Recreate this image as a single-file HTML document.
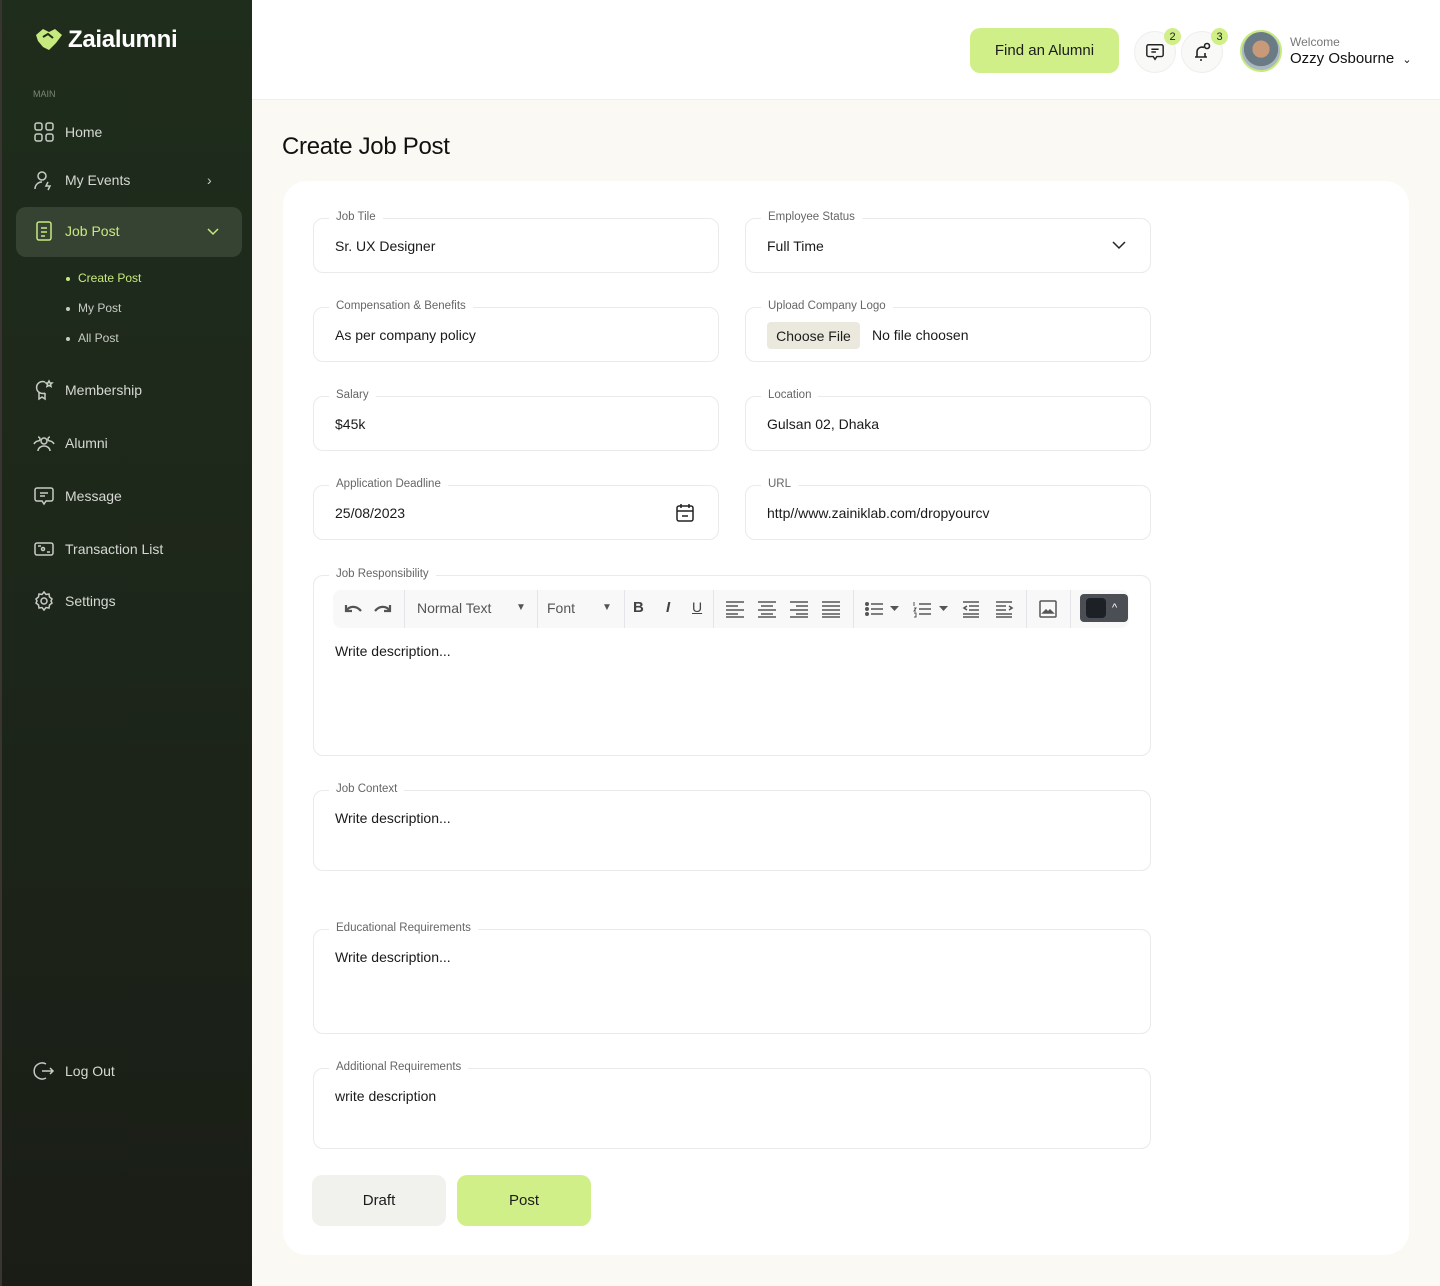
<!DOCTYPE html>
<html><head><meta charset="utf-8"><style>
*{box-sizing:border-box;margin:0;padding:0}
body{width:1440px;height:1286px;font-family:"Liberation Sans",sans-serif;background:#fbf9f3;position:relative;overflow:hidden;color:#1c1c1c}
.sb{position:absolute;left:0;top:0;width:252px;height:1286px;background:linear-gradient(180deg,#1f2d1c 0%,#1d261a 50%,#1a1d16 100%);border-left:2px solid #3a3530}
.logo{position:absolute;left:32px;top:26px;color:#fff;font-size:24px;font-weight:bold;display:flex;align-items:center;gap:4px;letter-spacing:-0.3px}
.main{position:absolute;left:31px;top:89px;font-size:9px;color:#7d8479}
.ni{position:absolute;left:31px;display:flex;align-items:center;gap:10px;color:#d6d8d3;font-size:14px}
.ni svg{width:22px;height:22px;stroke:#c8cbc5;fill:none;stroke-width:1.5}
.act{position:absolute;left:14px;top:207px;width:226px;height:50px;background:#364332;border-radius:10px}
.sub{position:absolute;left:64px;font-size:12px;color:#c9ccc5}
.sub:before{content:"";display:inline-block;width:4px;height:4px;border-radius:50%;background:currentColor;margin-right:8px;vertical-align:middle}
.hdr{position:absolute;left:252px;top:0;width:1188px;height:100px;background:#fff;border-bottom:1px solid #eee}
.btn1{position:absolute;left:970px;top:28px;width:149px;height:45px;background:#d0ef88;border-radius:10px;font-size:15px;display:flex;align-items:center;justify-content:center}
.circ{position:absolute;top:31px;width:42px;height:42px;border-radius:50%;background:#f9f9f7;border:1px solid #eee;display:flex;align-items:center;justify-content:center}
.badge{position:absolute;top:-4px;right:-6px;width:17px;height:17px;border-radius:50%;background:#d0ef88;font-size:11px;display:flex;align-items:center;justify-content:center}
h1{position:absolute;left:282px;top:133px;font-size:24px;font-weight:normal;color:#111;letter-spacing:-0.3px}
.card{position:absolute;left:283px;top:181px;width:1126px;height:1074px;background:#fff;border-radius:24px}
.f{position:absolute;border:1px solid #eaeaea;border-radius:10px;background:#fff}
.f .l{position:absolute;top:-8px;left:15px;padding:0 7px;background:#fff;font-size:11.5px;color:#666}
.f .v{position:absolute;left:21px;top:19px;font-size:14px;color:#1a1a1a}
.tb{position:absolute;left:19px;top:14px;width:796px;height:38px;background:#f8f8f8;border-radius:8px;font-size:14px;color:#555}
.tb>*{position:absolute}
.sep{width:1px;height:38px;top:0;background:#e3e5ea}
.tb svg{top:10px}
.bt{position:absolute;top:994px;width:134px;height:51px;border-radius:10px;display:flex;align-items:center;justify-content:center;font-size:15px}
</style></head><body>
<div class="sb">
<div class="logo"><svg width="30" height="26" viewBox="0 0 30 26"><path d="M2 8 L9 2 L15 5 L21 2 L28 8 L22 16 L15 23 L9 20 L4 14 Z" fill="#c6ea7e"/><path d="M9 10 L14 7 L19 11" stroke="#1f2d1c" stroke-width="2" fill="none"/></svg>Zaialumni</div>
<div class="main">MAIN</div>
<div class="ni" style="top:121px"><svg viewBox="0 0 22 22"><rect x="2" y="2" width="7" height="7" rx="2"/><rect x="13" y="2" width="7" height="7" rx="2"/><rect x="2" y="13" width="7" height="7" rx="2"/><rect x="13" y="13" width="7" height="7" rx="2"/></svg>Home</div>
<div class="ni" style="top:169px"><svg viewBox="0 0 22 22"><circle cx="9" cy="7" r="4"/><path d="M2 20c0-4 3-7 7-7M15 13l-2 4h4l-2 4"/></svg>My Events</div>
<div style="position:absolute;left:205px;top:172px;color:#ccc;font-size:14px">›</div>
<div class="act"></div>
<div class="ni" style="top:220px;color:#c6ea7e"><svg viewBox="0 0 22 22" style="stroke:#c6ea7e"><rect x="4" y="2" width="14" height="18" rx="2"/><path d="M8 8h6M8 12h6M8 16h4"/></svg>Job Post</div>
<svg style="position:absolute;left:205px;top:228px" width="12" height="8"><path d="M1 1l5 5 5-5" stroke="#c6ea7e" fill="none" stroke-width="1.5"/></svg>
<div class="sub" style="top:271px;color:#c6ea7e">Create Post</div>
<div class="sub" style="top:301px">My Post</div>
<div class="sub" style="top:331px">All Post</div>
<div class="ni" style="top:379px"><svg viewBox="0 0 22 22"><path d="M12 3a6 6 0 1 0 0 11M6 13v7l3-2 3 2v-6"/><path d="M16 2l1 2 2 0-1.5 1.5.5 2-2-1-2 1 .5-2L13 4h2z"/></svg>Membership</div>
<div class="ni" style="top:432px"><svg viewBox="0 0 22 22"><circle cx="11" cy="9" r="3"/><path d="M5 19c0-3 3-5 6-5s6 2 6 5M5 5a2 2 0 1 1 0 4M17 5a2 2 0 1 0 0 4M1 12c1-2 3-3 4-3M21 12c-1-2-3-3-4-3"/></svg>Alumni</div>
<div class="ni" style="top:485px"><svg viewBox="0 0 22 22"><path d="M4 3h14a2 2 0 0 1 2 2v9a2 2 0 0 1-2 2h-5l-2 3-2-3H4a2 2 0 0 1-2-2V5a2 2 0 0 1 2-2zM7 8h8M7 11h5"/></svg>Message</div>
<div class="ni" style="top:538px"><svg viewBox="0 0 22 22"><rect x="2" y="5" width="18" height="12" rx="2"/><circle cx="10" cy="11" r="1.5"/><path d="M5 8h3M14 14h3"/></svg>Transaction List</div>
<div class="ni" style="top:590px"><svg viewBox="0 0 22 22"><circle cx="11" cy="11" r="3"/><path d="M11 2l2 2.5 3-.5.5 3L19 9l-1 2 1 2-2.5 2-.5 3-3-.5L11 20l-2-2.5-3 .5-.5-3L3 13l1-2-1-2 2.5-2 .5-3 3 .5z"/></svg>Settings</div>
<div class="ni" style="top:1060px"><svg viewBox="0 0 22 22"><path d="M13 4a8 8 0 1 0 0 14M9 11h11M17 8l3 3-3 3"/></svg>Log Out</div>
</div>
<div class="hdr"></div>
<div class="btn1">Find an Alumni</div>
<div class="circ" style="left:1134px"><svg width="20" height="20" viewBox="0 0 22 22" fill="none" stroke="#222" stroke-width="1.6"><path d="M4 3h14a2 2 0 0 1 2 2v9a2 2 0 0 1-2 2h-5l-2 3-2-3H4a2 2 0 0 1-2-2V5a2 2 0 0 1 2-2zM7 8h8M7 11h5"/></svg><div class="badge">2</div></div>
<div class="circ" style="left:1181px"><svg width="22" height="22" viewBox="0 0 22 22" fill="none" stroke="#222" stroke-width="1.6"><path d="M4 16h12M6 16v-5a5 5 0 0 1 7-4.5M14 16v-4M9 19h2"/><circle cx="16" cy="5" r="2.5"/></svg><div class="badge">3</div></div>
<div style="position:absolute;left:1240px;top:30px;width:42px;height:42px;border-radius:50%;border:2px solid #c6ea7e;background:radial-gradient(circle at 50% 45%,#c89a7a 0 30%,#6a7b86 31% 60%,#a9b5bf 61%)"></div>
<div style="position:absolute;left:1290px;top:35px;font-size:12px;color:#777">Welcome</div>
<div style="position:absolute;left:1290px;top:50px;font-size:15px;color:#111">Ozzy Osbourne <span style="font-size:11px;margin-left:4px">⌄</span></div>
<h1>Create Job Post</h1>
<div class="card">
<div class="f" style="left:30px;top:37px;width:406px;height:55px"><span class="l">Job Tile</span><span class="v">Sr. UX Designer</span></div>
<div class="f" style="left:462px;top:37px;width:406px;height:55px"><span class="l">Employee Status</span><span class="v">Full Time</span><svg style="position:absolute;right:24px;top:22px" width="14" height="9"><path d="M1 1l6 6 6-6" stroke="#222" fill="none" stroke-width="1.5"/></svg></div>
<div class="f" style="left:30px;top:126px;width:406px;height:55px"><span class="l">Compensation &amp; Benefits</span><span class="v">As per company policy</span></div>
<div class="f" style="left:462px;top:126px;width:406px;height:55px"><span class="l">Upload Company Logo</span><span style="position:absolute;left:21px;top:14px;width:93px;height:27px;background:#ebe8dd;border-radius:4px;font-size:14px;display:flex;align-items:center;justify-content:center">Choose File</span><span class="v" style="left:126px">No file choosen</span></div>
<div class="f" style="left:30px;top:215px;width:406px;height:55px"><span class="l">Salary</span><span class="v">$45k</span></div>
<div class="f" style="left:462px;top:215px;width:406px;height:55px"><span class="l">Location</span><span class="v">Gulsan 02, Dhaka</span></div>
<div class="f" style="left:30px;top:304px;width:406px;height:55px"><span class="l">Application Deadline</span><span class="v">25/08/2023</span><svg style="position:absolute;right:23px;top:17px" width="20" height="20" viewBox="0 0 20 20" fill="none" stroke="#222" stroke-width="1.5"><rect x="2" y="3" width="16" height="15" rx="2"/><path d="M2 8h16M6 1v4M14 1v4M7 13h6"/></svg></div>
<div class="f" style="left:462px;top:304px;width:406px;height:55px"><span class="l">URL</span><span class="v">http//www.zainiklab.com/dropyourcv</span></div>
<div class="f" style="left:30px;top:394px;width:838px;height:181px"><span class="l">Job Responsibility</span>
<div class="tb">
<svg style="left:10px" width="20" height="18" viewBox="0 0 20 18" fill="none" stroke="#555" stroke-width="2.2"><path d="M3 5v6h6M3 11c3-5 10-6 15 0"/></svg>
<svg style="left:40px" width="20" height="18" viewBox="0 0 20 18" fill="none" stroke="#555" stroke-width="2.2"><path d="M17 5v6h-6M17 11c-3-5-10-6-15 0"/></svg>
<span class="sep" style="left:71px"></span>
<span style="left:84px;top:10px">Normal Text</span><span style="left:183px;top:12px;font-size:10px">▼</span>
<span class="sep" style="left:204px"></span>
<span style="left:214px;top:10px">Font</span><span style="left:269px;top:12px;font-size:10px">▼</span>
<span class="sep" style="left:291px"></span>
<b style="left:300px;top:9px;font-size:15px;color:#444">B</b><i style="left:333px;top:9px;font-size:15px;color:#444;font-weight:bold">I</i><u style="left:359px;top:9px;font-size:14px;color:#444">U</u>
<span class="sep" style="left:380px"></span>
<svg style="left:392px" width="120" height="18" viewBox="0 0 120 18" stroke="#555" stroke-width="1.6"><path d="M1 2h18M1 6h12M1 10h18M1 14h12M1 17h18"/><path d="M33 2h18M36 6h12M33 10h18M36 14h12M33 17h18"/><path d="M65 2h18M71 6h12M65 10h18M71 14h12M65 17h18"/><path d="M97 2h18M97 6h18M97 10h18M97 14h18M97 17h18"/></svg>
<span class="sep" style="left:520px"></span>
<svg style="left:532px" width="155" height="18" viewBox="0 0 155 18" fill="#555" stroke="#555" stroke-width="1.6"><circle cx="2" cy="4" r="1.2"/><circle cx="2" cy="9" r="1.2"/><circle cx="2" cy="14" r="1.2"/><path d="M6 4h12M6 9h12M6 14h12" fill="none"/><path d="M25 6h9l-4.5 5z" stroke="none"/><path d="M54 4h12M54 9h12M54 14h12" fill="none"/><path d="M49 2v4M49 8h2l-2 3h2M49 13h2v4h-2" fill="none" stroke-width="1"/><path d="M74 6h9l-4.5 5z" stroke="none"/><path d="M98 2h16M104 6h10M104 10h10M98 14h16M98 17h16M102 6l-3 2 3 2" fill="none"/><path d="M131 2h16M131 6h10M131 10h10M131 14h16M131 17h16M144 6l3 2-3 2" fill="none"/></svg>
<span class="sep" style="left:693px"></span>
<svg style="left:706px" width="18" height="18" viewBox="0 0 18 18" fill="none" stroke="#555" stroke-width="1.5"><rect x="1" y="1" width="16" height="16" rx="1"/><path d="M4 13l3-3 2 2 2-2 3 3z" fill="#555"/></svg>
<span class="sep" style="left:737px"></span>
<span style="left:747px;top:4px;width:48px;height:28px;background:#4b4f55;border-radius:4px;display:flex;align-items:center;padding-left:6px;color:#fff;font-size:11px"><span style="width:20px;height:20px;background:#1d2024;border-radius:4px;margin-right:6px"></span>^</span>
</div>
<span class="v" style="top:67px">Write description...</span></div>
<div class="f" style="left:30px;top:609px;width:838px;height:81px"><span class="l">Job Context</span><span class="v">Write description...</span></div>
<div class="f" style="left:30px;top:748px;width:838px;height:105px"><span class="l">Educational Requirements</span><span class="v">Write description...</span></div>
<div class="f" style="left:30px;top:887px;width:838px;height:81px"><span class="l">Additional Requirements</span><span class="v">write description</span></div>
<div class="bt" style="left:29px;background:#f1f1ee">Draft</div>
<div class="bt" style="left:174px;background:#d0ef88">Post</div>
</div>
</body></html>
